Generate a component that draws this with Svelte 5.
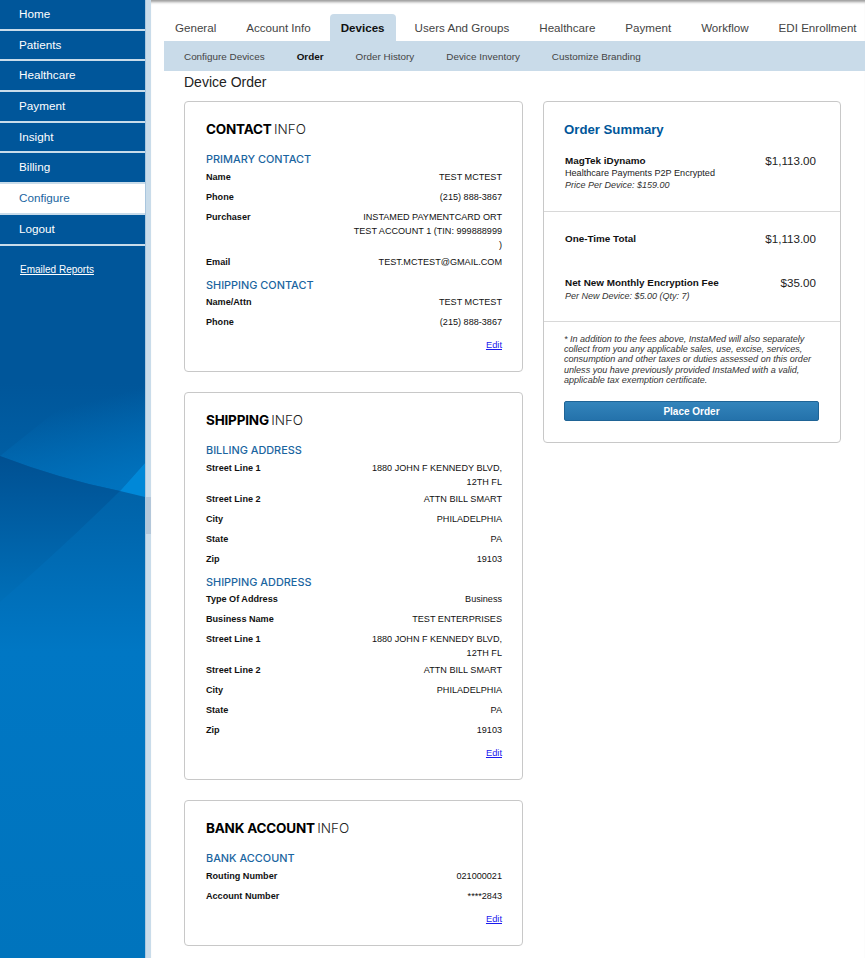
<script>
  const navItems = ['Home', 'Patients', 'Healthcare', 'Payment', 'Insight', 'Billing', 'Configure', 'Logout']
  const tabs = ['General', 'Account Info', 'Devices', 'Users And Groups', 'Healthcare', 'Payment', 'Workflow', 'EDI Enrollment']
  const subTabs = ['Configure Devices', 'Order', 'Order History', 'Device Inventory', 'Customize Branding']

  const address = [
    ['Street Line 1', ['1880 JOHN F KENNEDY BLVD,', '12TH FL']],
    ['Street Line 2', ['ATTN BILL SMART']],
    ['City', ['PHILADELPHIA']],
    ['State', ['PA']],
    ['Zip', ['19103']],
  ]

  const cards = [
    {
      title: 'CONTACT',
      sections: [
        {
          name: 'PRIMARY CONTACT',
          rows: [
            ['Name', ['TEST MCTEST']],
            ['Phone', ['(215) 888-3867']],
            ['Purchaser', ['INSTAMED PAYMENTCARD ORT', 'TEST ACCOUNT 1 (TIN: 999888999', ')']],
            ['Email', ['TEST.MCTEST@GMAIL.COM']],
          ],
        },
        {
          name: 'SHIPPING CONTACT',
          rows: [
            ['Name/Attn', ['TEST MCTEST']],
            ['Phone', ['(215) 888-3867']],
          ],
        },
      ],
    },
    {
      title: 'SHIPPING',
      sections: [
        { name: 'BILLING ADDRESS', rows: address },
        {
          name: 'SHIPPING ADDRESS',
          rows: [
            ['Type Of Address', ['Business']],
            ['Business Name', ['TEST ENTERPRISES']],
            ...address,
          ],
        },
      ],
    },
    {
      title: 'BANK ACCOUNT',
      sections: [
        {
          name: 'BANK ACCOUNT',
          rows: [
            ['Routing Number', ['021000021']],
            ['Account Number', ['****2843']],
          ],
        },
      ],
    },
  ]
</script>

<div class="page">
  <aside class="sidebar">
    <svg class="swoosh" width="145" height="958" viewBox="0 0 145 958" aria-hidden="true">
      <defs>
        <linearGradient id="base" x1="0" y1="0" x2="0" y2="1">
          <stop offset="0" stop-color="#00569a" />
          <stop offset="0.4" stop-color="#00569a" />
          <stop offset="0.52" stop-color="#0063a9" />
          <stop offset="0.68" stop-color="#0077c4" />
          <stop offset="1" stop-color="#0074bd" />
        </linearGradient>
        <linearGradient id="under" x1="0" y1="0" x2="0" y2="1">
          <stop offset="0" stop-color="#005092" />
          <stop offset="1" stop-color="#006fb8" />
        </linearGradient>
        <linearGradient id="glow" gradientUnits="userSpaceOnUse" x1="95" y1="400" x2="118" y2="485">
          <stop offset="0" stop-color="#0074c0" stop-opacity="0" />
          <stop offset="1" stop-color="#0074c0" stop-opacity="0.9" />
        </linearGradient>
      </defs>
      <rect width="145" height="958" fill="url(#base)" />
      <path d="M0 456 Q60 479 120 491 L145 463 V340 Q70 400 0 456 Z" fill="url(#glow)" />
      <path d="M0 456 Q60 479 120 491 Q60 550 0 602 Z" fill="url(#under)" />
      <path d="M120 491 L145 463 V497 Z" fill="#0088d8" />
    </svg>

    <nav class="nav">
      {#each navItems as item}
        <div class="nav-item" class:active={item === 'Configure'}>{item}</div>
      {/each}
    </nav>
    <div class="reports">Emailed Reports</div>
  </aside>

  <div class="splitter"><span class="handle"></span></div>

  <main class="main">
    <div class="tabs">
      {#each tabs as tab}
        <div class="tab" class:current={tab === 'Devices'}>{tab}</div>
      {/each}
    </div>
    <div class="subtabs">
      {#each subTabs as sub}
        <div class="subtab" class:current={sub === 'Order'}>{sub}</div>
      {/each}
    </div>

    <h1 class="page-title">Device Order</h1>

    <div class="columns">
      <div class="left">
        {#each cards as card}
          <section class="card info">
            <h2 class="card-title"><b>{card.title}</b> INFO</h2>
            {#each card.sections as section}
              <h3 class="section-title">{section.name}</h3>
              {#each section.rows as [label, lines]}
                <div class="row">
                  <div class="label">{label}</div>
                  <div class="value">
                    {#each lines as line}<div>{line}</div>{/each}
                  </div>
                </div>
              {/each}
            {/each}
            <div class="edit"><a href="#edit">Edit</a></div>
          </section>
        {/each}
      </div>

      <section class="card summary">
        <div class="sum-block first">
          <h2 class="sum-title">Order Summary</h2>
          <div class="line">
            <div>
              <div class="item-name">MagTek iDynamo</div>
              <div class="item-desc">Healthcare Payments P2P Encrypted</div>
              <div class="item-note">Price Per Device: $159.00</div>
            </div>
            <div class="price">$1,113.00</div>
          </div>
        </div>
        <div class="sum-block totals">
          <div class="line total">
            <div class="item-name">One-Time Total</div>
            <div class="price">$1,113.00</div>
          </div>
          <div class="line">
            <div>
              <div class="item-name">Net New Monthly Encryption Fee</div>
              <div class="item-note">Per New Device: $5.00 (Qty: 7)</div>
            </div>
            <div class="price">$35.00</div>
          </div>
        </div>
        <div class="sum-block last">
          <p class="legal">* In addition to the fees above, InstaMed will also separately collect from you any applicable sales, use, excise, services, consumption and other taxes or duties assessed on this order unless you have previously provided InstaMed with a valid, applicable tax exemption certificate.</p>
          <button class="place">Place Order</button>
        </div>
      </section>
    </div>
  </main>
</div>

<style>
  :global(body) { margin: 0; background: #fff; }

  .page {
    display: flex; width: 865px; height: 958px; overflow: hidden;
    font-family: "Liberation Sans", Arial, sans-serif; color: #222;
  }

  .sidebar { position: relative; flex: 0 0 145px; }
  .swoosh { position: absolute; inset: 0; display: block; }
  .nav { position: relative; }
  .nav-item {
    height: 28.7px; line-height: 28px; padding-left: 19px;
    background: #00569a; border-bottom: 2px solid #c9dcea;
    color: #fff; font-size: 11.7px;
  }
  .nav-item.active { background: #fff; color: #1a659f; }
  .reports {
    position: relative; margin: 17px 0 0 20px;
    color: #fff; font-size: 10px; line-height: 14px; text-decoration: underline;
  }

  .splitter { position: relative; flex: 0 0 6px; background: #c9dcea; border-left: 1px solid #a9c6de; box-sizing: border-box; }
  .handle { position: absolute; left: 0; right: 0; top: 497px; height: 37px; background: #b3c7da; }

  .main { flex: 1; min-width: 0; box-shadow: inset 0 4px 3px -2px #9a9a9a; padding-top: 14px; }

  .tabs { display: flex; gap: 8px; height: 27px; margin-left: 13px; }
  .tab {
    padding: 0 11px; line-height: 28px; font-size: 11.6px; color: #444;
    white-space: nowrap; border-radius: 4px 4px 0 0;
  }
  .tab.current { background: #c9dbe9; color: #111; font-weight: 700; }

  .subtabs {
    display: flex; gap: 32px; height: 30px; margin-left: 13px; padding-left: 20px;
    background: #c9dbe9; align-items: center;
  }
  .subtab { font-size: 9.9px; color: #444; white-space: nowrap; }
  .subtab.current { color: #111; font-weight: 700; }

  .page-title { margin: 2px 0 10px 33px; font-size: 14px; line-height: 18px; font-weight: 400; color: #222; }

  .columns { display: flex; gap: 20px; align-items: flex-start; margin-left: 33px; }
  .left { display: flex; flex-direction: column; gap: 20px; width: 339px; }

  .card {
    box-sizing: border-box; background: #fff;
    border: 1px solid #c8c8c8; border-radius: 4px;
  }
  .info { padding: 17px 20px 16px 21px; }

  .card-title {
    margin: 0 0 10px; font-family: Inter, sans-serif; font-size: 13.5px; line-height: 20px;
    font-weight: 300; color: #222; word-spacing: -1.5px;
  }
  .card-title b { font-weight: 700; color: #000; letter-spacing: -0.2px; word-spacing: 0; }

  .section-title {
    margin: 0; font-family: Inter, sans-serif; font-size: 10.9px; line-height: 20.5px;
    font-weight: 500; color: #1a659f;
  }

  .row { display: flex; justify-content: space-between; min-height: 20px; font-size: 9.1px; line-height: 14px; }
  .label { font-weight: 700; color: #111; }
  .value { padding-bottom: 3px; text-align: right; color: #111; max-width: 170px; }

  .edit { text-align: right; font-size: 9.3px; line-height: 20px; }
  .edit a { color: #1a1aee; }

  .summary { width: 298px; height: 342px; }
  .sum-block { padding: 0 20px; }
  .sum-block.first { height: 110px; padding-top: 18px; box-sizing: border-box; border-bottom: 1px solid #d8d8d8; }
  .sum-block.totals { height: 110px; padding-top: 20px; box-sizing: border-box; border-bottom: 1px solid #d8d8d8; }

  .sum-title {
    margin: 0 0 14px; font-size: 13.2px; line-height: 20px; font-weight: 700; color: #00569a;
  }

  .line { display: flex; justify-content: space-between; padding: 0 4px 0 1px; }
  .total { height: 44px; }
  .item-name { font-size: 9.9px; line-height: 14px; font-weight: 700; color: #111; }
  .item-desc { font-size: 9.1px; line-height: 11px; color: #222; }
  .item-note { font-size: 9px; line-height: 12px; font-style: italic; color: #333; }
  .price { margin-top: -1px; font-size: 11.6px; line-height: 15px; color: #222; }

  .sum-block.last { padding-top: 12px; }
  .legal { margin: 0 0 16px; font-size: 9.05px; line-height: 10.2px; font-style: italic; color: #333; }

  .place {
    display: block; width: 255px; height: 20px; padding: 0;
    background: linear-gradient(#3384bb, #2472ab); border: 1px solid #1f6496; border-radius: 2px;
    color: #fff; font-family: inherit; font-size: 10px; font-weight: 700;
  }
</style>
